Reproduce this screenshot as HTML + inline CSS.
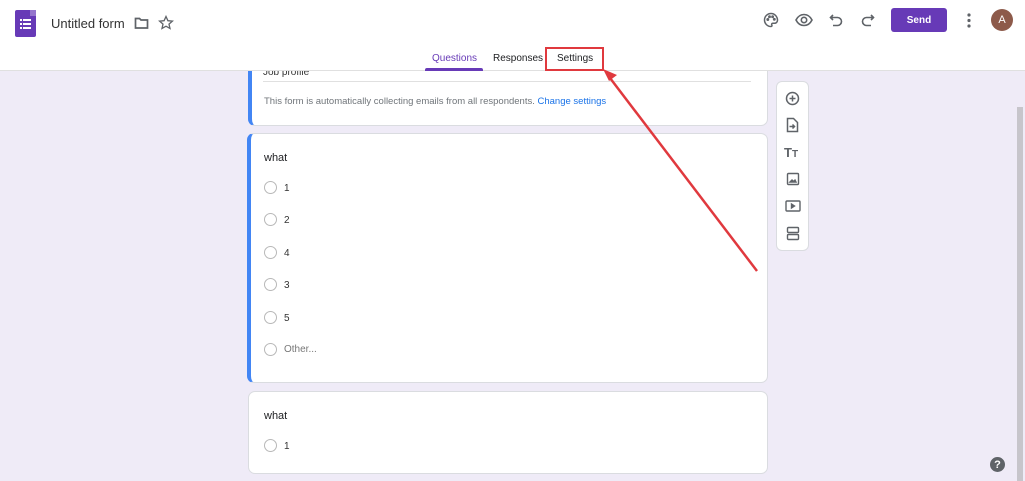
<!DOCTYPE html>
<html><head><meta charset="utf-8"><style>
*{box-sizing:border-box;margin:0;padding:0}
body{width:1025px;height:481px;overflow:hidden;background:#efebf7;font-family:"Liberation Sans",sans-serif;position:relative;color:#202124}
.hdr{position:absolute;left:0;top:0;width:1025px;height:71px;background:#fff;border-bottom:1px solid #e0e0e0}
.a{position:absolute}
.card{position:absolute;background:#fff;border-radius:7px;border:1px solid #dadce0}
.radio{position:absolute;width:13px;height:13px;border:1.5px solid #b8b8b8;border-radius:50%}
.opt{position:absolute;font-size:10px;color:#333}
svg.i{position:absolute;fill:none;stroke:#5f6368;stroke-width:1.7}
</style></head><body>
<!-- card 1 -->
<div class="card" style="left:248px;top:71px;width:520px;height:55px;border-left:4px solid #4285f4;border-top:none;border-radius:0 0 7px 7px"></div>
<div class="a" style="left:263px;top:71px;width:488px;height:10px;overflow:hidden"><div style="font-size:10px;color:#333;margin-top:-4px">Job profile</div></div>
<div class="a" style="left:263px;top:81px;width:488px;height:1px;background:#e0e0e0"></div>
<div class="a" style="left:264px;top:96px;font-size:9.5px;color:#70757a;white-space:nowrap">This form is automatically collecting emails from all respondents. <span style="color:#1a73e8">Change settings</span></div>

<div class="hdr" style="height:71px"></div>
<!-- logo -->
<div class="a" style="left:15px;top:10px;width:21px;height:27px;background:#673ab7;border-radius:2px"></div>
<div class="a" style="left:30px;top:10px;width:6px;height:6px;background:#9575cd"></div>
<svg class="a" style="left:15px;top:10px" width="21" height="27"><g fill="#fff"><rect x="5" y="9" width="2" height="2"/><rect x="8" y="9" width="8" height="2"/><rect x="5" y="13" width="2" height="2"/><rect x="8" y="13" width="8" height="2"/><rect x="5" y="17" width="2" height="2"/><rect x="8" y="17" width="8" height="2"/></g></svg>
<div class="a" style="left:51px;top:16px;font-size:13px;color:#333">Untitled form</div>
<svg class="i" style="left:134px;top:16px" width="15" height="14"><path d="M1.5 2.5h4l1.5 1.5h6.5v8h-12z"/></svg>
<svg class="i" style="left:158px;top:15px;stroke-width:1.3" width="16" height="16"><path d="M8 1.5l1.9 4.2 4.5.4-3.4 3 1 4.4L8 11.2l-4 2.3 1-4.4-3.4-3 4.5-.4z"/></svg>
<!-- right icons -->
<svg class="i" style="left:763px;top:12px;stroke-width:1.5" width="16" height="16"><path d="M8 1.5a6.5 6.5 0 0 0 0 13c1 0 1.2-.8.8-1.5-.5-.8 0-1.7 1-1.7h1.7a3 3 0 0 0 3-3C14.5 4.5 11.6 1.5 8 1.5z"/><circle cx="4.8" cy="7.5" r=".7"/><circle cx="6.5" cy="4.7" r=".7"/><circle cx="9.6" cy="4.7" r=".7"/><circle cx="11.3" cy="7.3" r=".7"/></svg>
<svg class="i" style="left:795px;top:13px;stroke-width:1.6" width="18" height="14"><path d="M1 7c2-4 5-5.5 8-5.5S15 3 17 7c-2 4-5 5.5-8 5.5S3 11 1 7z"/><circle cx="9" cy="7" r="2.7"/></svg>
<svg class="i" style="left:829px;top:13px;stroke-width:1.6" width="14" height="14"><path d="M4 2L1.5 4.5 4 7M1.5 4.5h7a4 4 0 0 1 0 8H4"/></svg>
<svg class="i" style="left:861px;top:13px;stroke-width:1.6" width="14" height="14"><path d="M10 2l2.5 2.5L10 7M12.5 4.5h-7a4 4 0 0 0 0 8H10"/></svg>
<div class="a" style="left:891px;top:8px;width:56px;height:24px;background:#673ab7;border-radius:3px;color:#fff;font-size:10px;font-weight:bold;display:flex;align-items:center;justify-content:center">Send</div>
<svg class="a" style="left:966px;top:13px" width="6" height="16"><g fill="#5f6368"><circle cx="3" cy="2" r="1.6"/><circle cx="3" cy="7.5" r="1.6"/><circle cx="3" cy="13" r="1.6"/></g></svg>
<div class="a" style="left:991px;top:9px;width:22px;height:22px;border-radius:50%;background:#8d5a4a;color:#fff;font-size:11px;display:flex;align-items:center;justify-content:center">A</div>
<!-- tabs -->
<div class="a" style="left:432px;top:53px;font-size:10px;color:#673ab7">Questions</div>
<div class="a" style="left:425px;top:68px;width:58px;height:3px;background:#673ab7;border-radius:2px 2px 0 0"></div>
<div class="a" style="left:493px;top:53px;font-size:10px;color:#202124">Responses</div>
<div class="a" style="left:557px;top:53px;font-size:10px;color:#202124">Settings</div>
<div class="a" style="left:545px;top:47px;width:59px;height:24px;border:2px solid #e0393e"></div>
<!-- card 2 -->
<div class="card" style="left:247px;top:133px;width:521px;height:250px;border-left:4px solid #4285f4"></div>
<div class="a" style="left:264px;top:152px;font-size:11px">what</div>
<div class="radio" style="left:264px;top:181px"></div><div class="opt" style="left:284px;top:183px">1</div>
<div class="radio" style="left:264px;top:213px"></div><div class="opt" style="left:284px;top:215px">2</div>
<div class="radio" style="left:264px;top:246px"></div><div class="opt" style="left:284px;top:248px">4</div>
<div class="radio" style="left:264px;top:278px"></div><div class="opt" style="left:284px;top:280px">3</div>
<div class="radio" style="left:264px;top:311px"></div><div class="opt" style="left:284px;top:313px">5</div>
<div class="radio" style="left:264px;top:343px"></div><div class="opt" style="left:284px;top:344px;color:#777">Other...</div>
<!-- card 3 -->
<div class="card" style="left:248px;top:391px;width:520px;height:83px"></div>
<div class="a" style="left:264px;top:410px;font-size:11px">what</div>
<div class="radio" style="left:264px;top:439px"></div><div class="opt" style="left:284px;top:441px">1</div>
<!-- side toolbar -->
<div class="card" style="left:776px;top:81px;width:33px;height:170px;border-radius:6px"></div>
<svg class="i" style="left:785px;top:91px;stroke-width:1.5" width="15" height="15"><circle cx="7.5" cy="7.5" r="6"/><path d="M7.5 4.5v6M4.5 7.5h6"/></svg>
<svg class="i" style="left:786px;top:117px;stroke-width:1.5" width="13" height="16"><path d="M1.5 1.5h6l4 4v9h-10zM3.5 9.5h5M6.5 7.5l2 2-2 2"/></svg>
<div class="a" style="left:784px;top:145px;font-size:13px;font-weight:bold;color:#5f6368">T<span style="font-size:10px">T</span></div>
<svg class="i" style="left:786px;top:172px;stroke-width:1.4" width="14" height="14"><rect x="1.5" y="1.5" width="11" height="11" rx="1"/><path d="M4 10l2-2 1.5 1.5L9 8l1 2z" fill="#5f6368"/></svg>
<svg class="i" style="left:785px;top:199px;stroke-width:1.4" width="16" height="14"><rect x="1" y="2" width="14" height="10" rx="1"/><path d="M6.5 5v4l3-2z" fill="#5f6368"/></svg>
<svg class="i" style="left:786px;top:226px;stroke-width:1.4" width="14" height="15"><rect x="1.5" y="1.5" width="11" height="5" rx="1"/><rect x="1.5" y="8.5" width="11" height="5" rx="1"/></svg>
<!-- scrollbar -->
<div class="a" style="left:1017px;top:107px;width:6px;height:374px;background:#c7c5cb"></div>
<!-- help -->
<div class="a" style="left:990px;top:457px;width:15px;height:15px;border-radius:50%;background:#5f6368;color:#fff;font-size:11px;font-weight:bold;display:flex;align-items:center;justify-content:center">?</div>
<!-- arrow -->
<svg class="a" style="left:0;top:0" width="1025" height="481"><line x1="757" y1="271" x2="610" y2="78" stroke="#e0393e" stroke-width="2.5"/><path d="M603 69l14 6-8 6z" fill="#e0393e"/></svg>
</body></html>
